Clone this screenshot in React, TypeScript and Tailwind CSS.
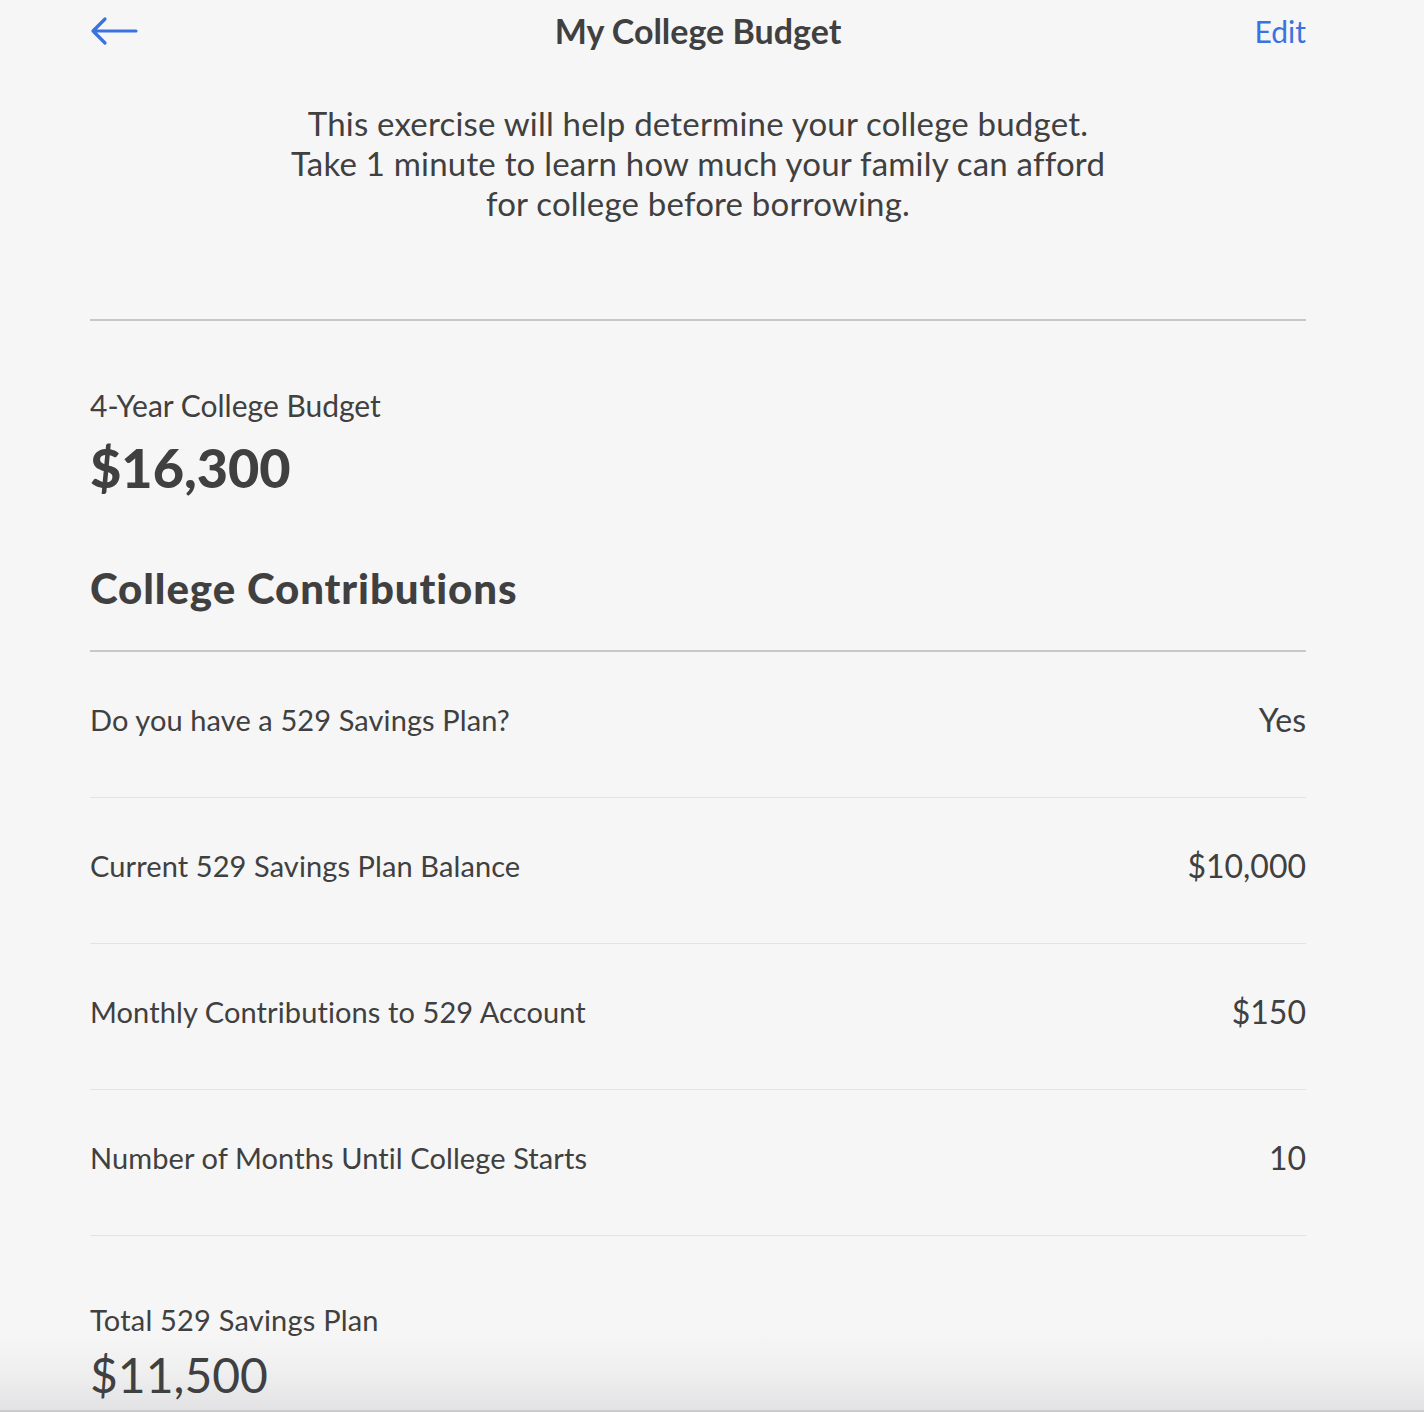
import React from "react";

const rows = [
  { label: "Do you have a 529 Savings Plan?", value: "Yes" },
  { label: "Current 529 Savings Plan Balance", value: "$10,000" },
  { label: "Monthly Contributions to 529 Account", value: "$150" },
  { label: "Number of Months Until College Starts", value: "10" },
];

export default function App() {
  return (
    <div className="relative h-[1412px] overflow-hidden bg-[#f6f6f6] font-['Lato','Noto_Sans',sans-serif] text-[#404040]">
      <div className="pointer-events-none absolute inset-x-0 bottom-0 h-[80px] bg-gradient-to-b from-[#f6f6f6] via-[#efeff0] to-[#e2e2e4]" />
      <div className="pointer-events-none absolute inset-x-0 bottom-0 h-[2px] bg-[#cbcbcd]" />

      <div className="relative ml-[90px] w-[1216px]">
        <header className="grid h-[62px] grid-cols-[1fr_auto_1fr] items-center">
          <button className="flex items-center justify-self-start" aria-label="Back">
            <svg width="48" height="30" viewBox="0 0 48 30" fill="none">
              <path
                d="M3 15H46M15 3L3 15L15 27"
                stroke="#3a72e0"
                strokeWidth="3.2"
                strokeLinecap="round"
                strokeLinejoin="round"
              />
            </svg>
          </button>
          <h1 className="text-[34px] font-bold leading-[40px] text-[#404040]">My College Budget</h1>
          <button className="justify-self-end text-[30px] leading-[36px] text-[#3a72e0]">Edit</button>
        </header>

        <p className="mt-[41px] text-center text-[33px] leading-[40px] tracking-[0.2px] text-[#404040]">
          This exercise will help determine your college budget.
          <br />
          Take 1 minute to learn how much your family can afford
          <br />
          for college before borrowing.
        </p>

        <div className="mt-[96px] h-[2px] bg-[#c8c8cc]" />

        <div className="mt-[66px] text-[30px] leading-[36px]">4-Year College Budget</div>
        <div className="mt-[15px] text-[54px] font-black leading-[60px]">$16,300</div>

        <h2 className="mt-[65px] text-[42px] font-black leading-[50px] tracking-[0.9px]">College Contributions</h2>

        <div className="mt-[37px] h-[2px] bg-[#c8c8cc]" />

        {rows.map((r) => (
          <div
            key={r.label}
            className="flex h-[146px] items-center justify-between border-b border-[#e3e3e3] pb-[10px]"
          >
            <span className="text-[29px] leading-[36px] tracking-[0.1px]">{r.label}</span>
            <span className="text-[32px] leading-[36px]">{r.value}</span>
          </div>
        ))}

        <div className="mt-[66px] text-[29px] leading-[36px] tracking-[0.2px]">Total 529 Savings Plan</div>
        <div className="mt-[7px] text-[48px] leading-[60px]">$11,500</div>
      </div>
    </div>
  );
}
